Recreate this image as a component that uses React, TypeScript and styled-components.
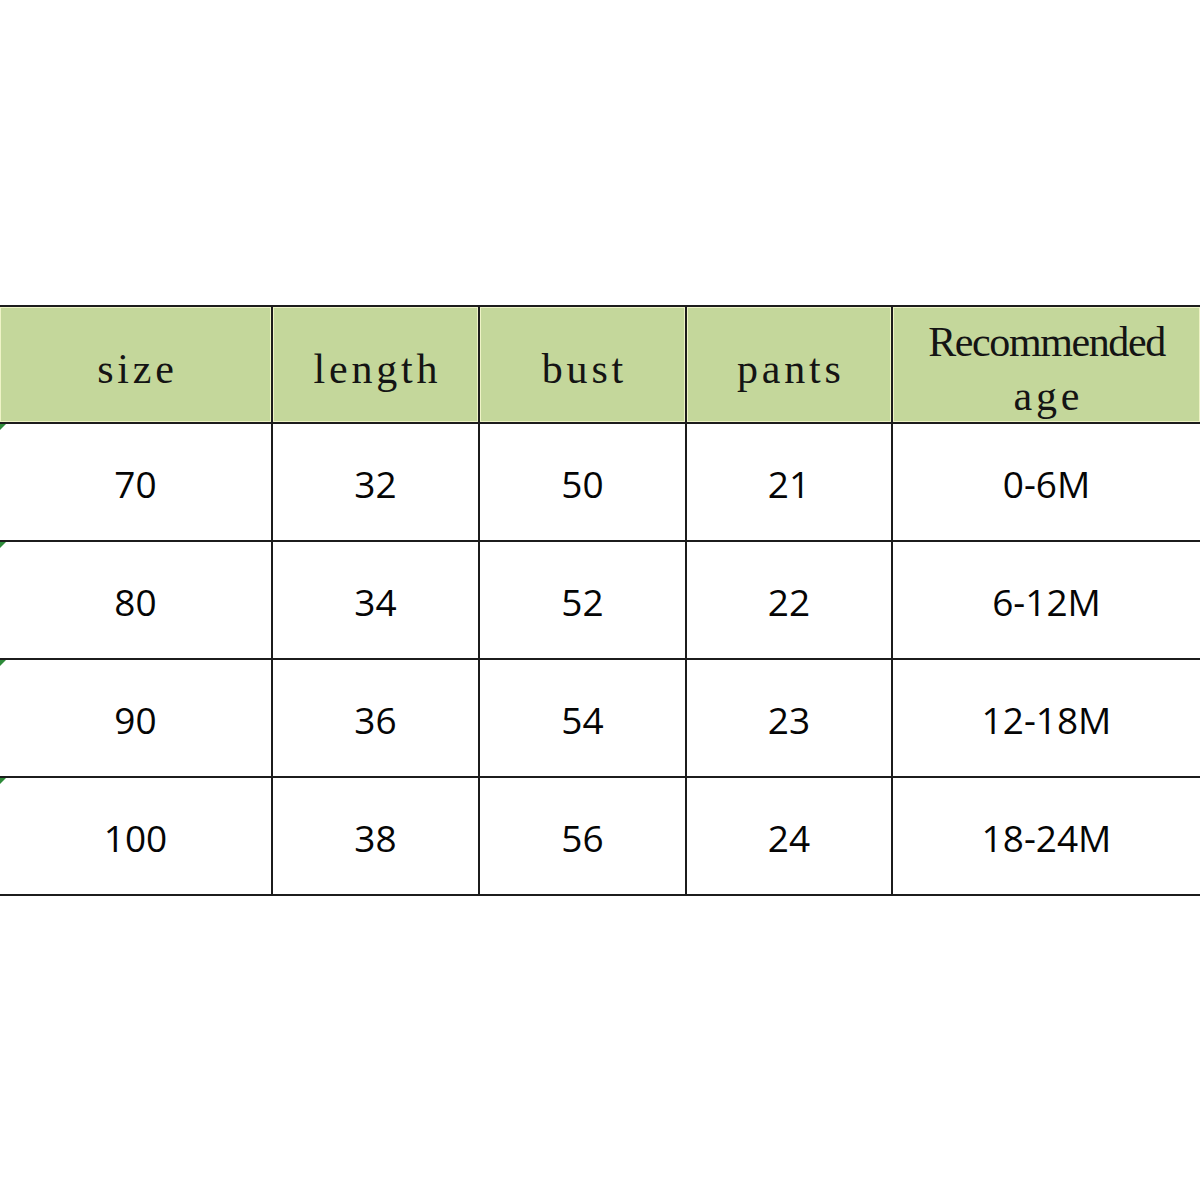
import React from "react";
import styled, { createGlobalStyle } from "styled-components";

const GlobalStyle = createGlobalStyle`
  html, body {
    margin: 0;
    padding: 0;
    background: #fff;
  }
`

const Page = styled.div`
  width: 1200px;
  height: 1200px;
  padding-top: 305px;
  box-sizing: border-box;
  overflow: hidden;
  background: #fff;
`

const Grid = styled.div`
  display: grid;
  grid-template-columns: 271px 205px 205px 204px 307px;
  grid-template-rows: 115px repeat(4, 116px);
  gap: 2px;
  padding: 2px 0;
  background: #1c1c1c;
  width: 1200px;
`

const HeadCell = styled.div`
  display: flex;
  align-items: center;
  justify-content: center;
  flex-direction: column;
  background: #c4d79b;
  box-shadow: inset 0 0 0 1px #eef3c6;
  font-family: "Liberation Serif", serif;
  font-size: 42px;
  line-height: 54px;
  color: #141414;
  text-align: center;
  padding-top: 8px;
  box-sizing: border-box;
`

const Label = styled.span<{ $spacing: number }>`
  letter-spacing: ${p => p.$spacing}px;
  padding-left: ${p => p.$spacing}px;
`

const Cell = styled.div<{ $mark?: boolean }>`
  position: relative;
  display: flex;
  align-items: center;
  justify-content: center;
  background: #fff;
  font-family: "Open Sans", "Noto Sans", sans-serif;
  font-size: 37px;
  color: #050505;
  padding-top: 2px;
  box-sizing: border-box;

  &::before {
    content: "";
    display: ${p => (p.$mark ? "block" : "none")};
    position: absolute;
    left: 0;
    top: 0;
    border-top: 6px solid #2e8b3a;
    border-right: 6px solid transparent;
  }
`

const headers = ["size", "length", "bust", "pants"]

const rows = [
  ["70", "32", "50", "21", "0-6M"],
  ["80", "34", "52", "22", "6-12M"],
  ["90", "36", "54", "23", "12-18M"],
  ["100", "38", "56", "24", "18-24M"],
]

export default function App() {
  return (
    <>
      <GlobalStyle />
      <Page>
        <Grid>
          {headers.map(h => (
            <HeadCell key={h}>
              <Label $spacing={3.8}>{h}</Label>
            </HeadCell>
          ))}
          <HeadCell>
            <Label $spacing={-1.4}>Recommended</Label>
            <Label $spacing={3.8}>age</Label>
          </HeadCell>
          {rows.map((r, i) =>
            r.map((v, j) => (
              <Cell key={i + "-" + j} $mark={j === 0}>
                {v}
              </Cell>
            ))
          )}
        </Grid>
      </Page>
    </>
  );
}
